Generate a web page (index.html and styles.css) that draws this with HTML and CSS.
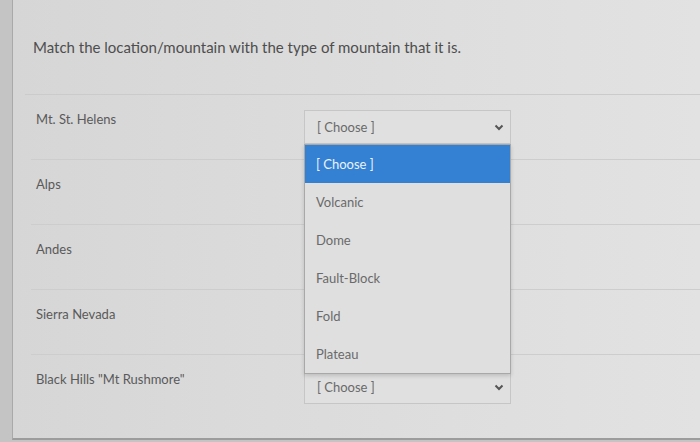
FILE: index.html
```html
<html lang="en">
<head>
    <meta charset="UTF-8">
    <title>Matching Question</title>
    <link rel="stylesheet" href="styles.css">
</head>
<body>
    <div class="page">
        <div class="card">
            <div class="question">Match the location/mountain with the type of mountain that it is.</div>
            <div class="answers">
                <div class="row">
                    <div class="label">Mt. St. Helens</div>
                    <div class="select">
                        <span>[ Choose ]</span>
                        <svg class="chev" width="10" height="7" viewBox="0 0 10 7"><polyline points="1.5,1.5 5,5 8.5,1.5" fill="none" stroke="#555" stroke-width="2"/></svg>
                    </div>
                </div>
                <div class="row">
                    <div class="label">Alps</div>
                    <div class="select covered"></div>
                </div>
                <div class="row">
                    <div class="label">Andes</div>
                    <div class="select covered"></div>
                </div>
                <div class="row">
                    <div class="label">Sierra Nevada</div>
                    <div class="select covered"></div>
                </div>
                <div class="row last">
                    <div class="label">Black Hills "Mt Rushmore"</div>
                    <div class="select">
                        <span>[ Choose ]</span>
                        <svg class="chev" width="10" height="7" viewBox="0 0 10 7"><polyline points="1.5,1.5 5,5 8.5,1.5" fill="none" stroke="#555" stroke-width="2"/></svg>
                    </div>
                </div>
            </div>

            <!-- open list of the first select -->
            <ul class="dropdown">
                <li class="selected">[ Choose ]</li>
                <li>Volcanic</li>
                <li>Dome</li>
                <li>Fault-Block</li>
                <li>Fold</li>
                <li>Plateau</li>
            </ul>
        </div>
    </div>
</body>
</html>
```

FILE: styles.css
```css
body {
    margin: 0;
    padding: 0;
    background: #c4c4c4;
    font-family: Lato, "Open Sans", sans-serif;
}

.page {
    width: 700px;
    height: 442px;
    padding-left: 12px;
    box-sizing: border-box;
    overflow: hidden;
}

.card {
    position: relative;
    height: 440px;
    background: linear-gradient(to right, #d6d6d6, #dcdcdc 45%, #e2e2e2);
    border-left: 1px solid #a9a9a9;
    border-bottom: 2px solid #9c9c9c;
    box-sizing: border-box;
}

.question {
    height: 95px;
    margin-left: 12px;
    padding: 37px 0 0 8px;
    box-sizing: border-box;
    border-bottom: 1px solid #cbcbcb;
    font-size: 15px;
    line-height: 20px;
    color: #4e4e4e;
}

.answers {
    margin-left: 18px;
}

.row {
    display: flex;
    height: 65px;
    border-bottom: 1px solid #cdcdcd;
    box-sizing: border-box;
}

.row.last {
    border-bottom: none;
}

.label {
    width: 273px;
    padding: 16px 0 0 5px;
    box-sizing: border-box;
    font-size: 13px;
    line-height: 16px;
    color: #5a5a5a;
}

.select {
    display: flex;
    align-items: center;
    justify-content: space-between;
    width: 207px;
    height: 34px;
    margin-top: 15px;
    padding: 0 6px 0 12px;
    box-sizing: border-box;
    background: #e0e0e0;
    border: 1px solid #c6c6c6;
    font-size: 13px;
    color: #6a6a6a;
}

.select.covered {
    visibility: hidden;
}

.chev {
    display: block;
}

.dropdown {
    position: absolute;
    top: 144px;
    left: 291px;
    width: 207px;
    margin: 0;
    padding: 0;
    list-style: none;
    background: #dfdfdf;
    border: 1px solid #a8a8a8;
    box-sizing: border-box;
    box-shadow: 0 2px 4px rgba(0, 0, 0, 0.15);
}

.dropdown li {
    height: 38px;
    padding-left: 11px;
    line-height: 38px;
    font-size: 13px;
    color: #6a6a6a;
}

.dropdown li.selected {
    background: #3480d2;
    color: #eaf2fb;
}
```
